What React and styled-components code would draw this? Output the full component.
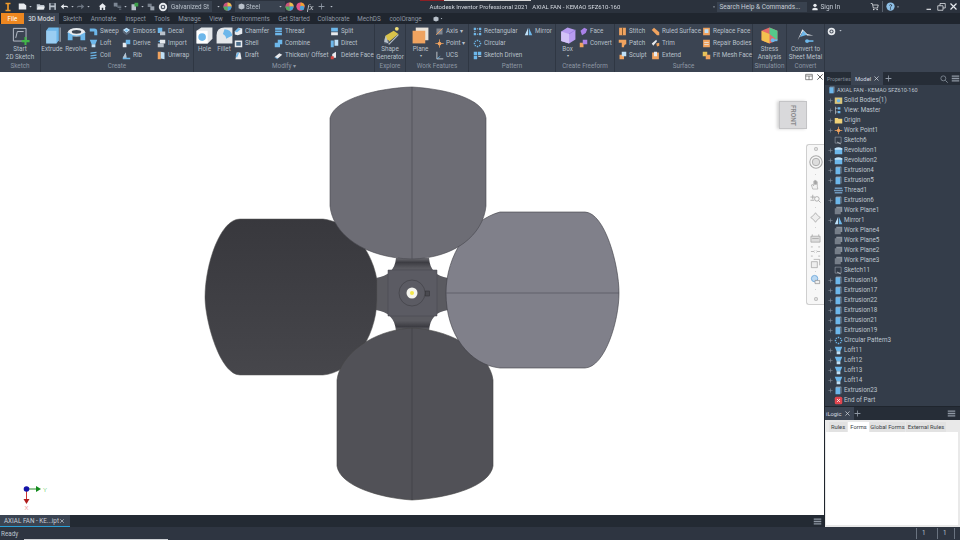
import React from 'react';
import styled, { createGlobalStyle } from 'styled-components';

const Global = createGlobalStyle`
  html, body { margin: 0; padding: 0; background: #2b323d; overflow: hidden; }
  #root { width: 960px; height: 540px; }
  * { box-sizing: border-box; }
`;

const B = '#6db7ea', L = '#bfe0f7', O = '#f0a35f', G = '#b9c1cb', W = '#e8ebef', D = '#5d6b7c', Gn = '#43b649';

const ICONS = {
  logo: <path d="M3 1h6v1.6H7v6.8h2V11H3V9.4h2V2.6H3z" fill="#f09a2b" />,
  doc: <path d="M1 2h7l3 2.5V10H1z" fill={W} />,
  open: <><path d="M1 3h4l1 1h5v6H1z" fill={G} /><path d="M1 10l2-4h9l-2 4z" fill={W} /></>,
  save: <><path d="M1.5 1.5h9v9h-9z" fill={G} /><path d="M3.5 1.5h5v3h-5zM3.5 7h5v3.5h-5z" fill="#39424f" /></>,
  undo: <path d="M1 6l4-3.5V5h3.5Q11 5 11 8 10 6.8 8 6.8H5v2.7z" fill={W} />,
  redo: <path d="M11 6L7 2.5V5H3.500Q1 5 1 8 2 6.800 4 6.800h3v2.700z" fill="#6d7683" />,
  caret: <path d="M4 5h4L6 7.500z" fill={G} />,
  home: <path d="M6 1.500L11 6H9.500v4.500H7V7.500H5v3H2.500V6H1z" fill={W} />,
  sel: <><path d="M1 1h5v5H1z" fill="#7d8794" /><path d="M4 5h7v1H4zM6 7h5v1H6zM8 9h3v1H8z" fill="#7d8794" /></>,
  green: <><path d="M2 3h6v8H2z" fill={G} /><path d="M6 1h5v5H6z" fill="#3fa34d" /></>,
  layers: <><path d="M1 1h6v5H1z" fill="#78818d" /><path d="M5 5h6v6H5z" fill="#98a1ac" /></>,
  gear: <><circle cx="6" cy="6" r="5" fill={W} /><circle cx="6" cy="6" r="2.800" fill="#4b5461" /><circle cx="6" cy="6" r="1.400" fill={W} /></>,
  ball: <><circle cx="6" cy="6" r="5.500" fill="#c9537d" /><path d="M6 .5A5.500 5.500 0 0 1 11.500 6H6z" fill="#e9c14a" /><path d="M11.500 6A5.500 5.500 0 0 1 6 11.500V6z" fill="#3ea7d8" /><path d="M6 11.500A5.500 5.500 0 0 1 .5 6H6z" fill="#4cae62" /></>,
  ball2: <><circle cx="6" cy="6" r="5.500" fill="#e2568a" /><path d="M6 .5A5.500 5.500 0 0 1 11.500 6H6z" fill="#f0a030" /><circle cx="8" cy="8" r="3" fill="#4ba3d8" /></>,
  cube: <path d="M1 3l5-2 5 2v6l-5 2-5-2z" fill={G} />,
  sketch: <><path d="M1.500 1.500h8v8h-8z" fill="none" stroke={G} strokeWidth=".6" /><path d="M3 7.500L4 3.500h4" fill="none" stroke={G} strokeWidth=".6" /><path d="M8.500 7h1.300v1.900h1.900v1.300H9.800V12H8.500v-1.800H6.700V8.900h1.800z" fill={Gn} /></>,
  extrude: <><path d="M2 3l1.500-2h6.500v8L8.500 11H2z" fill={B} /><path d="M2 3h6.500v8H2z" fill={L} opacity=".55" /><path d="M10.800 1v9" stroke={G} strokeWidth=".6" /></>,
  revolve: <><ellipse cx="6" cy="4" rx="5.500" ry="2.700" fill={W} /><path d="M.5 4v5h3V6.500h5V9h3V4Q6 8 .5 4z" fill={B} /><ellipse cx="6" cy="3.700" rx="3" ry="1.200" fill="#3b4452" /></>,
  sweep: <path d="M1 2h6q4 0 4 4v5H7V6H1z" fill={B} />,
  loft: <><path d="M1 1h10L8.500 7h-5z" fill={B} /><path d="M3.500 7h5v4h-5z" fill={L} /></>,
  coil: <path d="M2 2l8-1v1.800l-8 1zM2 5.500l8-1v1.800l-8 1zM2 9l8-1v1.800l-8 1z" fill={B} />,
  emboss: <><path d="M1 4l5-3 5 3-5 4z" fill={L} /><path d="M4 4.500L6 3l2 1.500L6 6z" fill={B} /><path d="M1 4v3l5 4 5-4V4L6 8z" fill={D} /></>,
  derive: <><path d="M1 5h5v6H1z" fill={W} /><path d="M5 1h6v6H5z" fill={B} /></>,
  rib: <><path d="M1 11V9L5 2l1 7h5v2z" fill={B} /><path d="M5 2l1 7H1z" fill={G} /></>,
  decal: <><path d="M1 1h6v7H1z" fill={B} /><path d="M4 6h7v5H4z" fill={G} /></>,
  import: <><path d="M1 6h8v5H1z" fill={G} /><path d="M4 1h7v5H4z" fill={W} /><path d="M1 3l3-1.500v3z" fill={B} /></>,
  unwrap: <><path d="M1 1h4v10H1z" fill={O} /><path d="M5 1l5 1v9l-5-1z" fill={L} /></>,
  hole: <><path d="M1 3l3-2h7v7l-3 3H1z" fill="#e4e7ea" /><path d="M1 3h7v8H1z" fill="#fff" /><circle cx="4.500" cy="7" r="2.400" fill={B} /></>,
  fillet: <><path d="M1 11V6Q1 1 6 1h5v10z" fill="#e4e7ea" /><path d="M6 2Q10 2 11 6L7 8Q7 6 5 5z" fill={B} /></>,
  chamfer: <><path d="M1 6l5-5 5 1v7l-6 2-4-1z" fill={W} /><path d="M1 6l5-5 3 2-5 4z" fill={B} /></>,
  shell: <><path d="M1 2h10v9H1z" fill={W} /><path d="M3 4h6v5H3z" fill="#4d6f8d" /></>,
  draft: <><path d="M2 11L3.500 2h5l1.500 9z" fill={W} /><path d="M5 2l-3 5 2 2 3-7z" fill={B} /></>,
  thread: <><path d="M1.500 1h9v2.500h-9zM1.500 4.500h9V7h-9zM1.500 8h9v3h-9z" fill={B} /></>,
  combine: <path d="M5 1h6v6H8v4H1V5h4z" fill={B} />,
  thicken: <><path d="M1 8l6-5 4 2-6 5z" fill={W} /><path d="M1 8l4 2v1L1 9z" fill={B} /></>,
  split: <><path d="M1.500 1h9v5h-9z" fill={B} /><path d="M1.500 7h9v4h-9z" fill={W} /></>,
  direct: <><path d="M1 2h4v9H1z" fill={B} /><path d="M6 1h5v8H6z" fill={L} /></>,
  deleteFace: <><path d="M3 4l5-3v8H3z" fill={W} /><path d="M1 7h4v4H1z" fill="#d9463f" /></>,
  shape: <><path d="M3 6l5-3 3 2-6 5-3-1z" fill="#d9c34a" /><path d="M2 8l3 1v2H2z" fill={D} /><path d="M3 6L2 10l3 1 6-6v1l-6 6z" fill={G} /><circle cx="10" cy="1.800" r="1.200" fill="#f2e07a" /></>,
  plane: <><path d="M3 1h8v8H3z" fill="#e9e3da" /><path d="M1 3h8v8H1z" fill={O} /></>,
  axis: <><path d="M2 2h8v8H2z" fill={W} opacity=".4" /><path d="M1.500 10.500L10 2" stroke={O} strokeWidth="1.200" /></>,
  point: <><circle cx="6" cy="6" r="2.500" fill={O} /><path d="M6 .5v11M.5 6h11" stroke={O} strokeWidth="1" /></>,
  ucs: <><path d="M2.500 1v9.500H11" fill="none" stroke={W} strokeWidth="1" /><path d="M2.500 10.500L7 7" stroke={B} strokeWidth="1" /></>,
  rect: <><path d="M1 1h3v3H1zM8 1h3v3H8zM1 8h3v3H1zM8 8h3v3H8z" fill={B} /><path d="M5 2h2v1H5zM5 9h2v1H5zM2 5h1v2H2zM9 5h1v2H9z" fill={L} /></>,
  circ: <path d="M5 1h2v2H5zM5 9h2v2H5zM1 5h2v2H1zM9 5h2v2H9zM2.300 2.300h1.600v1.600H2.300zM8.100 2.300h1.600v1.600H8.100zM2.300 8.100h1.600v1.600H2.300zM8.100 8.100h1.600v1.600H8.100z" fill={B} />,
  driven: <><path d="M1 1h4.500v4.500H1zM6.500 1H11v4.500H6.500z" fill={B} /><path d="M1 6.500h4.500V11H1z" fill={B} /><path d="M7 7h4v1H7z" fill={W} /></>,
  mirror: <><path d="M5.500 1L1 11h4.500z" fill={L} /><path d="M6.500 1L11 11H6.500z" fill={B} /></>,
  box: <><path d="M2 3.500L6 1l5 1.500v6L7 11 2 9.500z" fill="#b79cf0" /><path d="M2 3.500l5 1.500v6l-5-1.500z" fill="#d3c2f7" /><path d="M7 5l4-2.500" stroke="#8f72d8" strokeWidth=".4" /></>,
  face: <path d="M2 5l5-4 4 2-2 5-5 3z" fill="#a982e8" />,
  convert: <><path d="M1 5h5v6H1z" fill={O} /><path d="M5 1h6v6H5z" fill="#a982e8" /></>,
  stitch: <><path d="M1.500 1h9v10h-9z" fill={O} /><path d="M5.500 1h1v10h-1z" fill="#5d4225" /></>,
  patch: <path d="M1 1h10v6q-3 0-3 4H5V5H1z" fill={O} />,
  sculpt: <><path d="M2 5h6v6H2z" fill={O} /><path d="M5 1h6v6H5z" fill={L} /></>,
  ruled: <path d="M1 4l3-3 7 6v4H8z" fill={O} />,
  trim: <><path d="M1 6l6-5 1 2-5 6z" fill={W} /><path d="M7 6l4-1v4l-3 1z" fill={O} /></>,
  extend: <><path d="M1.500 2h9v9h-9z" fill={O} /><path d="M4 1h4v6H4z" fill={W} /></>,
  replace: <><path d="M1.500 1h9v10h-9z" fill={O} /><path d="M3.500 3h5v5h-5z" fill={L} /></>,
  repair: <><path d="M1.500 1h9v10h-9z" fill={O} /><path d="M3 4h6v1H3zM3 7h6v1H3z" fill={W} /></>,
  fitmesh: <><path d="M1 1h6v6H1z" fill="#e6c35a" /><path d="M5 5h6v6H5z" fill={O} /></>,
  stress: <><path d="M1 3l5-2 5 2v6l-5 2-5-2z" fill="#e66a6a" /><path d="M6 1l5 2v6L6 5z" fill="#55c98a" /><path d="M1 9V3l5 2v6z" fill="#f3c14f" /><path d="M7 9h4" stroke={B} strokeWidth="1.200" /><circle cx="8" cy="9" r="1.200" fill={B} /></>,
  sheet: <><path d="M1 9l3-7 3 3 4 1H7L4 4z" fill={W} /><path d="M2.500 7L4.500 3l2.500 2.500z" fill={B} /><path d="M6 9.500h5" stroke={B} strokeWidth="1" /><circle cx="7" cy="9.500" r="1.200" fill={B} /></>,
  folder: <path d="M1 2.500h4l1 1h5V10H1z" fill="#efd178" />,
  solid: <><path d="M1 2h10v8.500H1z" fill="#d9c47a" /><circle cx="6" cy="6.300" r="2.300" fill={B} /></>,
  view: <><path d="M2 1v10M2 3h3M2 8h3" stroke={W} strokeWidth=".7" fill="none" /><path d="M5 1.500h3.500v3H5zM5 6.500h3.500v3H5z" fill={B} /></>,
  workpoint: <><path d="M6 1v10M1 6h10" stroke={O} strokeWidth="1" /><circle cx="6" cy="6" r="2.300" fill={O} /></>,
  treesketch: <><path d="M1.500 1.500h8v8h-8z" fill="none" stroke={G} strokeWidth=".6" /><path d="M4 8l5 2.500" stroke={W} strokeWidth=".8" /></>,
  revol: <><path d="M1 3h10v8H1z" fill={B} /><path d="M1 3q5-3 10 0v2H1z" fill={L} /></>,
  ext: <><path d="M2 2h6.500v9H2z" fill={B} /><path d="M2 2l1-1h6.500L8.500 2z" fill={L} /><path d="M9.500 1v9" stroke={G} strokeWidth=".6" /></>,
  threadT: <path d="M1 2h10v2H1zM0 5h12v2H0zM1 8h10v2H1z" fill="#6f97bb" />,
  wplane: <><path d="M3 1h8v7H3z" fill="#8a929c" /><path d="M1 3h8v8H1z" fill="#767e89" /></>,
  end: <><rect x="1" y="1" width="10" height="10" rx="2" fill="#e0464f" /><path d="M4 4l4 4M8 4l-4 4" stroke="#fff" strokeWidth="1" /></>,
  cart: <><path d="M1 2h2l1.500 6H10l1-4H4" fill="none" stroke={W} strokeWidth="1" /><circle cx="5" cy="10" r="1" fill={W} /><circle cx="9.500" cy="10" r="1" fill={W} /></>,
  user: <><circle cx="6" cy="3.500" r="2.500" fill={W} /><path d="M2 11V8.500Q6 5.500 10 8.500V11z" fill={W} /></>,
  help: <><circle cx="6" cy="6" r="5.500" fill="#8fc1e8" /><path d="M4.500 4.500Q6 2.500 7.500 4 8 5.500 6 6.500V7.500" fill="none" stroke="#26303c" strokeWidth="1.100" /><circle cx="6" cy="9.200" r=".8" fill="#26303c" /></>,
  min: <path d="M2 9h6v1.500H2z" fill={W} />,
  restore: <><path d="M4 2h7v6H4z" fill="none" stroke={W} strokeWidth="1" /><path d="M1 5h7v6H1z" fill="#2b323d" stroke={W} strokeWidth="1" /></>,
  close: <path d="M2 2l8 8M10 2l-8 8" stroke={W} strokeWidth="1.600" />,
  search: <><circle cx="5" cy="5" r="3.700" fill="none" stroke="#8f98a4" strokeWidth="1.100" /><path d="M8 8l3.500 3.500" stroke="#8f98a4" strokeWidth="1.300" /></>,
  menu: <path d="M1 2h10v1.800H1zM1 5.100h10v1.800H1zM1 8.200h10V10H1z" fill="#8f98a4" />,
  plus: <path d="M5.300 1h1.400v4.300H11v1.400H6.700V11H5.300V6.700H1V5.300h4.300z" fill="#8f98a4" />,
  x: <path d="M2.500 2.500l7 7M9.500 2.500l-7 7" stroke="#d8dde3" strokeWidth="1.200" />,
  winSplit: <><path d="M1 2h10v8H1z" fill="none" stroke="#555" strokeWidth="1" /><path d="M1 4.500h10M6 4.500V10" stroke="#555" strokeWidth="1" /></>,
  winClose: <path d="M2 2l8 8M10 2l-8 8" stroke="#444" strokeWidth="1.300" />,
  navRing: <><circle cx="6" cy="6" r="5.300" fill="none" stroke="#aaa" strokeWidth=".9" /><circle cx="6" cy="6" r="3.200" fill="#ddd" stroke="#aaa" strokeWidth=".8" /></>,
  navHand: <path d="M3 11L1.500 6.500 3 6l1 1.500V2.500l1 0V6 1.500h1V6 2h1v4-3h1v5L8.500 11z" fill="#f2f2f2" stroke="#999" strokeWidth=".6" />,
  navZoom: <><circle cx="7.500" cy="7.500" r="2.500" fill="none" stroke="#999" strokeWidth=".8" /><path d="M9.300 9.300L11.500 11.500M.5 5.500h5M3 3v5M.5 9h4" stroke="#999" strokeWidth=".8" /></>,
  navOrbit: <path d="M6 .8L8 3.500 11.200 6 8 8.500 6 11.200 4 8.500.8 6 4 3.500z" fill="#eee" stroke="#999" strokeWidth=".7" />,
  navCube: <><path d="M1 3.500h10V10H1z" fill="#ddd" stroke="#999" strokeWidth=".7" /><path d="M2.500 1.500v2M9.500 1.500v2M2.500 6h7" stroke="#999" strokeWidth=".7" /></>,
  navFit: <path d="M1 1h2M9 1h2M1 11h2M9 11h2M1 6h3M8 6h3M4 6l1-1M4 6l1 1M8 6L7 5M8 6l-1 1" stroke="#999" strokeWidth=".7" fill="none" />,
  navPage: <><path d="M4 1.500h6.500V8" fill="none" stroke="#999" strokeWidth=".7" /><path d="M1.500 4h6.500v6.500H1.500z" fill="#eee" stroke="#999" strokeWidth=".7" /></>,
  navBlue: <><circle cx="5" cy="5" r="3.500" fill="#bcd9f2" stroke="#5b9bd5" strokeWidth=".8" /><path d="M5.500 7h5v3.500h-5z" fill="#eee" stroke="#777" strokeWidth=".6" /></>,
  navDot: <circle cx="6" cy="6" r="1" fill="#aaa" />,
  navGear: <><circle cx="6" cy="6" r="4" fill="#bbb" /><circle cx="6" cy="6" r="1.800" fill="#eee" /></>,
};

const IconSvg = styled.svg`
  display: block;
  flex: none;
  width: ${p => p.$s}px;
  height: ${p => p.$s}px;
`;
const Icon = ({ k, s = 9 }) => <IconSvg $s={s} viewBox="0 0 12 12">{ICONS[k]}</IconSvg>;

const Window = styled.div`
  width: 960px;
  height: 540px;
  display: flex;
  flex-direction: column;
  font-family: "Roboto", "Liberation Sans", sans-serif;
  font-size: 6.3px;
  color: #b8c0ca;
  overflow: hidden;
  filter: blur(0.3px);
`;

const TitleBar = styled.div`
  position: relative;
  height: 13px;
  flex: none;
  background: #2b323d;
  display: flex;
  align-items: center;
`;
const Qat = styled.div`
  display: flex;
  align-items: center;
  width: ${p => p.$w}px;
  flex: none;
  padding-left: ${p => p.$pl || 0}px;
  gap: ${p => p.$gap || 0}px;
`;
const QatSep = styled.span`
  width: 1px;
  height: 11px;
  background: #59626f;
  margin: 0 3px;
`;
const Combo = styled.div`
  width: ${p => p.$w}px;
  height: 11px;
  flex: none;
  background: #39424f;
  display: flex;
  align-items: center;
  justify-content: space-between;
  padding: 0 1px 0 3px;
  gap: 1px;
  white-space: nowrap;
`;
const ComboText = styled.span`
  flex: 1;
  overflow: hidden;
`;
const Fx = styled.span`
  font-family: "Liberation Serif", serif;
  font-style: italic;
  font-size: 9px;
  color: #d6dbe1;
`;
const TitleText = styled.div`
  width: 280px;
  flex: none;
  color: #d4d9e0;
  font-size: 6px;
  white-space: pre;
`;
const Progress = styled.div`
  position: absolute;
  top: 0;
  left: 420px;
  width: 111px;
  height: 1px;
  background: linear-gradient(90deg, #8c1f24 0 22%, #d8d8d8 22%);
`;
const SearchBox = styled.div`
  width: 90px;
  height: 10px;
  flex: none;
  background: #39424f;
  padding-left: 3px;
  line-height: 10px;
  font-size: 6.5px;
  color: #c5ccd5;
  white-space: nowrap;
`;
const SignIn = styled.div`
  width: 63px;
  padding-left: 4px;
  flex: none;
  display: flex;
  align-items: center;
  gap: 2px;
  font-size: 6.5px;
  color: #c5ccd5;
`;

const TabBar = styled.div`
  height: 11px;
  flex: none;
  background: #20262f;
  display: flex;
  align-items: stretch;
  padding-left: 1px;
`;
const Tab = styled.div`
  width: ${p => p.$w}px;
  flex: none;
  display: flex;
  align-items: center;
  justify-content: center;
  white-space: nowrap;
  color: ${p => (p.$active ? '#e6eaee' : p.$file ? '#fff' : '#8f98a4')};
  background: ${p => (p.$active ? '#3b4452' : p.$file ? '#ee8720' : 'transparent')};
`;

const Ribbon = styled.div`
  height: 48px;
  flex: none;
  background: #3b4452;
  display: flex;
`;
const Panel = styled.section`
  width: ${p => p.$w}px;
  flex: none;
  display: flex;
  flex-direction: column;
  border-right: 1px solid #2f3743;
`;
const PanelBody = styled.div`
  flex: 1;
  display: flex;
  padding-left: ${p => p.$pl || 0}px;
`;
const PanelTitle = styled.div`
  height: 10px;
  flex: none;
  text-align: center;
  line-height: 9px;
  color: #8d97a4;
  white-space: nowrap;
`;
const Big = styled.div`
  width: ${p => p.$w}px;
  flex: none;
  display: flex;
  flex-direction: column;
  align-items: center;
  padding-top: 2px;
  text-align: center;
  line-height: 7.5px;
  white-space: nowrap;
`;
const BigLabel = styled.div`
  margin-top: 1px;
`;
const Caret = styled.div`
  height: 4px;
  line-height: 4px;
  font-size: 4px;
  color: #bcc4ce;
`;
const Col = styled.div`
  width: ${p => p.$w}px;
  flex: none;
  padding-top: 1px;
`;
const Small = styled.div`
  height: 12px;
  display: flex;
  align-items: center;
  gap: 2px;
  white-space: nowrap;
`;
const Spare = styled.div`
  flex: 1;
  padding: 3px 0 0 2px;
  display: flex;
  gap: 1px;
  align-items: flex-start;
`;

const Main = styled.div`
  flex: 1;
  display: flex;
  min-height: 0;
`;
const LeftColumn = styled.div`
  width: 824px;
  flex: none;
  display: flex;
  flex-direction: column;
`;
const Canvas = styled.div`
  position: relative;
  flex: 1;
  background: #fff;
  overflow: hidden;
`;
const FanSvg = styled.svg`
  position: absolute;
  inset: 0;
  display: block;
`;
const WinButtons = styled.div`
  position: absolute;
  top: 1px;
  right: 0;
  display: flex;
  gap: 3px;
`;
const ViewCube = styled.div`
  position: absolute;
  left: 779px;
  top: 29px;
  width: 28px;
  height: 28px;
  background: #d9d9db;
  border: 1px solid #c4c4c6;
  box-shadow: -2px 0 3px rgba(0, 0, 0, 0.18);
  display: flex;
  align-items: center;
  justify-content: center;
`;
const CubeLabel = styled.span`
  writing-mode: vertical-rl;
  font-size: 6.5px;
  font-weight: 700;
  color: #8b8b8e;
`;
const NavBar = styled.div`
  position: absolute;
  left: 806px;
  top: 72px;
  width: 18px;
  height: 161px;
  background: #f7f7f7;
  border: 1px solid #cfcfcf;
  border-right: none;
  border-radius: 3px 0 0 3px;
  display: flex;
  flex-direction: column;
  align-items: center;
`;
const NavSlot = styled.div`
  height: ${p => p.$h}px;
  flex: none;
  display: flex;
  align-items: center;
  justify-content: center;
`;

const Side = styled.aside`
  flex: 1;
  display: flex;
  flex-direction: column;
  background: #1f252d;
  padding-left: 1px;
  min-width: 0;
`;
const PaneHead = styled.div`
  height: ${p => p.$h}px;
  flex: none;
  background: #262d37;
  display: flex;
  align-items: stretch;
`;
const PaneTab = styled.div`
  width: ${p => p.$w}px;
  flex: none;
  display: flex;
  align-items: center;
  padding-left: ${p => p.$pl || 2}px;
  gap: 2px;
  font-size: ${p => (p.$on ? 5.8 : 5.2)}px;
  color: ${p => (p.$on ? '#d5dae0' : '#808a96')};
  background: ${p => (p.$on ? '#3b4452' : 'transparent')};
  white-space: nowrap;
`;
const HeadTool = styled.div`
  display: flex;
  align-items: center;
  padding-left: ${p => p.$pl || 0}px;
`;
const Tree = styled.div`
  height: 321px;
  flex: none;
  background: #343d4a;
  overflow: hidden;
`;
const Row = styled.div`
  height: 10px;
  display: flex;
  align-items: center;
  padding-left: ${p => (p.$root ? 3 : 0)}px;
  font-size: ${p => (p.$root ? 5.5 : 6.3)}px;
  white-space: nowrap;
  color: #bfc6cf;
`;
const Expander = styled.span`
  width: 9px;
  flex: none;
  padding-left: 3px;
  display: flex;
`;
const RowIcon = styled.span`
  margin-right: 1px;
  flex: none;
`;
const Divider = styled.div`
  height: 1px;
  flex: none;
  background: #1f252d;
`;
const Forms = styled.div`
  flex: 1;
  background: #e9e9e9;
  padding: 2px 2px 2px 1px;
  display: flex;
  flex-direction: column;
`;
const FormTabs = styled.div`
  height: 10px;
  flex: none;
  display: flex;
  padding-left: 3px;
  gap: 1px;
`;
const FormTab = styled.div`
  width: ${p => p.$w}px;
  flex: none;
  text-align: center;
  line-height: 10px;
  font-size: 5.8px;
  color: #3a3f46;
  background: ${p => (p.$on ? '#fff' : '#e2e2e2')};
  white-space: nowrap;
`;
const FormBody = styled.div`
  flex: 1;
  background: #fff;
`;

const DocBar = styled.div`
  height: 12px;
  flex: none;
  background: #232a33;
  display: flex;
  justify-content: space-between;
  align-items: stretch;
`;
const DocTab = styled.div`
  width: 70px;
  background: #3b4452;
  border-bottom: 1px solid #2a9fd6;
  display: flex;
  align-items: center;
  justify-content: space-between;
  padding: 0 5px 0 4px;
  color: #c8ced6;
  white-space: nowrap;
`;
const DocMenu = styled.div`
  display: flex;
  align-items: center;
  padding-right: 2px;
`;
const Status = styled.footer`
  position: relative;
  height: 13px;
  flex: none;
  background: #2e3541;
  display: flex;
  align-items: center;
  padding-left: 1px;
  color: #bcc4ce;
`;
const StatusText = styled.span`
  flex: 1;
`;
const StatusCell = styled.span`
  width: ${p => p.$w}px;
  flex: none;
  height: 11px;
  border-left: 1px solid #6a7380;
  padding-left: 5px;
  line-height: 11px;
`;
const Sliver = styled.div`
  position: absolute;
  left: 24px;
  bottom: 0;
  width: 144px;
  height: 1px;
  background: #cfd2d6;
`;

const panels = [
  { t: 'Sketch', w: 41, items: [{ big: ['Start', '2D Sketch'], i: 'sketch', w: 40 }] },
  { t: 'Create', w: 153, items: [
    { big: ['Extrude'], i: 'extrude', w: 22 }, { big: ['Revolve'], i: 'revolve', w: 26 },
    { w: 33, col: [['sweep', 'Sweep'], ['loft', 'Loft'], ['coil', 'Coil']] },
    { w: 35, col: [['emboss', 'Emboss'], ['derive', 'Derive'], ['rib', 'Rib']] },
    { w: 34, col: [['decal', 'Decal'], ['import', 'Import'], ['unwrap', 'Unwrap']] },
  ] },
  { t: 'Modify  ▾', w: 181, pl: 1, items: [
    { big: ['Hole'], i: 'hole', w: 19 }, { big: ['Fillet'], i: 'fillet', w: 20 },
    { w: 40, col: [['chamfer', 'Chamfer'], ['shell', 'Shell'], ['draft', 'Draft']] },
    { w: 56, col: [['thread', 'Thread'], ['combine', 'Combine'], ['thicken', 'Thicken/ Offset']] },
    { w: 44, col: [['split', 'Split'], ['direct', 'Direct'], ['deleteFace', 'Delete Face']] },
  ] },
  { t: 'Explore', w: 31, items: [{ big: ['Shape', 'Generator'], i: 'shape', w: 30 }] },
  { t: 'Work Features', w: 63, items: [
    { big: ['Plane'], i: 'plane', w: 29, caret: true },
    { w: 33, col: [['axis', 'Axis  ▾'], ['point', 'Point  ▾'], ['ucs', 'UCS']] },
  ] },
  { t: 'Pattern', w: 87, pl: 4, items: [
    { w: 51, col: [['rect', 'Rectangular'], ['circ', 'Circular'], ['driven', 'Sketch Driven']] },
    { w: 31, col: [['mirror', 'Mirror']] },
  ] },
  { t: 'Create Freeform', w: 59, items: [
    { big: ['Box'], i: 'box', w: 23, caret: true },
    { w: 35, col: [['face', 'Face'], ['convert', 'Convert']] },
  ] },
  { t: 'Surface', w: 138, pl: 3, items: [
    { w: 33, col: [['stitch', 'Stitch'], ['patch', 'Patch'], ['sculpt', 'Sculpt']] },
    { w: 51, col: [['ruled', 'Ruled Surface'], ['trim', 'Trim'], ['extend', 'Extend']] },
    { w: 50, col: [['replace', 'Replace Face'], ['repair', 'Repair Bodies'], ['fitmesh', 'Fit Mesh Face']] },
  ] },
  { t: 'Simulation', w: 34, items: [{ big: ['Stress', 'Analysis'], i: 'stress', w: 33 }] },
  { t: 'Convert', w: 38, items: [{ big: ['Convert to', 'Sheet Metal'], i: 'sheet', w: 37 }] },
];

const tabs = [
  ['3D Model', 35], ['Sketch', 27], ['Annotate', 35], ['Inspect', 29], ['Tools', 24], ['Manage', 31],
  ['View', 22], ['Environments', 47], ['Get Started', 40], ['Collaborate', 39], ['MechDS', 32], ['coolOrange', 41],
];

const ext = n => ['ext', 'Extrusion' + n, true];
const tree = [
  ['solid', 'Solid Bodies(1)', true], ['view', 'View: Master', true], ['folder', 'Origin', true],
  ['workpoint', 'Work Point1', true], ['treesketch', 'Sketch6', false],
  ['revol', 'Revolution1', true], ['revol', 'Revolution2', true], ext(4), ext(5),
  ['threadT', 'Thread1', false], ext(6), ['wplane', 'Work Plane1', false], ['mirror', 'Mirror1', true],
  ['wplane', 'Work Plane4', false], ['wplane', 'Work Plane5', false], ['wplane', 'Work Plane2', false],
  ['wplane', 'Work Plane3', false], ['treesketch', 'Sketch11', false],
  ext(16), ext(17), ext(22), ext(18), ext(21), ext(19),
  ['circ', 'Circular Pattern3', true], ['loft', 'Loft11', true], ['loft', 'Loft12', true],
  ['loft', 'Loft13', true], ['loft', 'Loft14', true], ext(23), ['end', 'End of Part', false],
];

const navItems = [
  ['navGear', 8], ['navRing', 18], ['navDot', 6], ['navHand', 14], ['navZoom', 13], ['navDot', 7], ['navOrbit', 13],
  ['navDot', 7], ['navCube', 14], ['navFit', 13], ['navPage', 11], ['navDot', 4], ['navBlue', 13], ['navDot', 7], ['navGear', 11],
];

const Fan = () => (
  <FanSvg width="824" height="443" viewBox="0 72 824 443">
    <defs>
      <linearGradient id="rim" x1="0" y1="0" x2="0" y2="1">
        <stop offset="0" stopColor="#6d6d73" /><stop offset=".06" stopColor="#3c3c42" /><stop offset=".14" stopColor="#5a5a60" />
        <stop offset=".86" stopColor="#5a5a60" /><stop offset=".94" stopColor="#3c3c42" /><stop offset="1" stopColor="#77777d" />
      </linearGradient>
      <linearGradient id="leftB" x1="0" y1="0" x2="0" y2="1">
        <stop offset="0" stopColor="#38383d" /><stop offset="1" stopColor="#46464b" />
      </linearGradient>
    </defs>
    <path d="M396 258H429C430 270 436 276 448 278V310C436 312 430 318 429 331H396C395 318 388 312 376 310V278C388 276 395 270 396 258Z" fill="url(#rim)" />
    <path d="M388 270H437V316H388Z" fill="#5b5b63" stroke="#47474d" strokeWidth=".5" />
    <circle cx="412" cy="293" r="13" fill="none" stroke="#3d3d42" strokeWidth=".6" />
    <rect x="425.500" y="291" width="4" height="5" fill="#4a4a50" stroke="#2d2d30" strokeWidth=".5" />
    <circle cx="412" cy="293" r="5.500" fill="#f4f4ee" />
    <circle cx="412" cy="293" r="2" fill="#f3e84a" />
    <path d="M240 219L323 219C350 222 372 250 377 280V300C376 340 350 373 323 375L240 375C220 375 205 321 205 297C205 265 220 219 240 219Z" fill="url(#leftB)" stroke="#555" strokeWidth=".5" />
    <path d="M412 328C372 330 340 355 337 380V466C340 486 380 498 412 500C450 498 490 486 493 466V380C490 355 455 330 412 328Z" fill="#515157" stroke="#444" strokeWidth=".6" />
    <path d="M412 328V500" stroke="#3f3f45" strokeWidth=".7" />
    <path d="M500 212L585 212C605 213 619 265 619 293C619 321 605 367 585 368L500 368C470 365 446 335 446 293C446 255 470 220 500 212Z" fill="#80808a" stroke="#3d3d43" strokeWidth=".6" />
    <path d="M446 293H619" stroke="#55555c" strokeWidth=".7" />
    <path d="M412 87C380 88 335 98 330 118V206C333 235 365 258 412 259C455 258 483 235 486 206V118C483 98 445 89 412 87Z" fill="#6d6d75" stroke="#47474d" strokeWidth=".6" />
    <path d="M412 87V259" stroke="#4c4c53" strokeWidth=".7" />
    <path d="M26.500 489V499" stroke="#c33" strokeWidth="1" />
    <path d="M26.500 489H37" stroke="#2a8a2a" strokeWidth="1" />
    <path d="M23.500 499H29.500L26.500 504Z" fill="#b01c1c" />
    <path d="M36 486L41 489L36 492Z" fill="#118a1b" />
    <circle cx="26.500" cy="489" r="2.800" fill="#1313a8" />
    <text x="43" y="491.500" fontSize="6" fill="#7fd67f" fontFamily="Liberation Sans">Y</text>
    <text x="24.500" y="509.500" fontSize="6" fill="#ef9a9a" fontFamily="Liberation Sans">X</text>
  </FanSvg>
);

export default function App() {
  return (
    <Window>
      <Global />
      <TitleBar>
        <Qat $w={168} $pl={3}>
          <Icon k="logo" s={10} />
          <Qat $w={5} />
          <Icon k="doc" s={9} /><Icon k="caret" s={7} /><Qat $w={2} />
          <Icon k="open" s={9} /><Qat $w={3} /><Icon k="save" s={9} /><Qat $w={3} />
          <Icon k="undo" s={9} /><Icon k="caret" s={7} /><Icon k="redo" s={9} /><Icon k="caret" s={7} />
          <QatSep />
          <Icon k="home" s={9} /><Qat $w={6} /><Icon k="sel" s={9} /><Icon k="caret" s={7} /><Qat $w={1} />
          <Icon k="green" s={9} /><Icon k="caret" s={7} /><Qat $w={1} />
          <Icon k="layers" s={8} /><Qat $w={3} /><Icon k="gear" s={10} />
        </Qat>
        <Combo $w={44}><ComboText>Galvanized St</ComboText></Combo>
        <Qat $w={3} /><Qat $w={8}><Icon k="caret" s={7} /></Qat>
        <Icon k="ball" s={9} />
        <Qat $w={3} />
        <Combo $w={50}><Icon k="cube" s={7} /><ComboText>Steel</ComboText><Icon k="caret" s={7} /></Combo>
        <Icon k="ball" s={9} /><Qat $w={2} /><Icon k="ball2" s={9} /><Qat $w={2} />
        <Fx>fx</Fx><Qat $w={4} /><Icon k="plus" s={7} /><Qat $w={3} /><Icon k="caret" s={7} />
        <Qat $w={95} />
        <TitleText>Autodesk Inventor Professional 2021   AXIAL FAN - KEMAO SFZ610-160</TitleText>
        <Qat $w={1} />
        <Icon k="caret" s={6} />
        <SearchBox>Search Help &amp; Commands...</SearchBox>
        <SignIn><Icon k="user" s={8} />Sign In</SignIn>
        <Icon k="cart" s={9} />
        <QatSep />
        <Icon k="help" s={9} />
        <Icon k="caret" s={6} />
        <Qat $w={24} />
        <Icon k="min" s={9} /><Qat $w={3} /><Icon k="restore" s={9} /><Qat $w={3} /><Icon k="close" s={9} />
        <Progress />
      </TitleBar>

      <TabBar>
        <Tab $w={23} $file>File</Tab>
        {tabs.map(([n, w], i) => <Tab key={n} $w={w} $active={i === 0}>{n}</Tab>)}
        <Tab $w={24}><Icon k="cube" s={6} /><Icon k="caret" s={5} /></Tab>
      </TabBar>

      <Ribbon>
        {panels.map(p => (
          <Panel key={p.t} $w={p.w}>
            <PanelBody $pl={p.pl}>
              {p.items.map((it, i) => it.big ? (
                <Big key={i} $w={it.w}>
                  <Icon k={it.i} s={19} />
                  <BigLabel>{it.big.map(l => <div key={l}>{l}</div>)}</BigLabel>
                  {it.caret && <Caret>▾</Caret>}
                </Big>
              ) : (
                <Col key={i} $w={it.w}>
                  {it.col.map(([k, l]) => <Small key={l}><Icon k={k} s={9} />{l}</Small>)}
                </Col>
              ))}
            </PanelBody>
            <PanelTitle>{p.t}</PanelTitle>
          </Panel>
        ))}
        <Spare><Icon k="gear" s={9} /><Icon k="caret" s={7} /></Spare>
      </Ribbon>

      <Main>
        <LeftColumn>
          <Canvas>
            <Fan />
            <WinButtons><Icon k="winSplit" s={8} /><Icon k="winClose" s={8} /></WinButtons>
            <ViewCube><CubeLabel>FRONT</CubeLabel></ViewCube>
            <NavBar>
              {navItems.map(([k, h], i) => <NavSlot key={i} $h={h}><Icon k={k} s={k === 'navDot' ? 5 : k === 'navGear' ? 6 : k === 'navRing' ? 14 : 11} /></NavSlot>)}
            </NavBar>
          </Canvas>
          <DocBar>
            <DocTab>AXIAL FAN - KE...ipt<Icon k="x" s={6} /></DocTab>
            <DocMenu><Icon k="menu" s={9} /></DocMenu>
          </DocBar>
        </LeftColumn>
        <Side>
          <PaneHead $h={13}>
            <PaneTab $w={26} $pl={2}>Properties</PaneTab>
            <PaneTab $w={32} $on $pl={4}>Model<Icon k="x" s={7} /></PaneTab>
            <HeadTool $pl={2}><Icon k="plus" s={7} /></HeadTool>
            <HeadTool $pl={48}><Icon k="search" s={8} /></HeadTool>
            <HeadTool $pl={3}><Icon k="menu" s={9} /></HeadTool>
          </PaneHead>
          <Tree>
            <Row $root><RowIcon><Icon k="ext" s={8} /></RowIcon>AXIAL FAN - KEMAO SFZ610-160</Row>
            {tree.map(([k, l, plus]) => (
              <Row key={l}>
                <Expander>{plus && <Icon k="plus" s={5} />}</Expander>
                <RowIcon><Icon k={k} s={9} /></RowIcon>
                {l}
              </Row>
            ))}
          </Tree>
          <Divider />
          <PaneHead $h={13}>
            <PaneTab $w={29} $on $pl={1}>iLogic<Icon k="x" s={7} /></PaneTab>
            <HeadTool $pl={0}><Icon k="plus" s={7} /></HeadTool>
            <HeadTool $pl={86}><Icon k="menu" s={9} /></HeadTool>
          </PaneHead>
          <Forms>
            <FormTabs>
              <FormTab $w={18}>Rules</FormTab>
              <FormTab $w={21} $on>Forms</FormTab>
              <FormTab $w={35}>Global Forms</FormTab>
              <FormTab $w={40}>External Rules</FormTab>
            </FormTabs>
            <FormBody />
          </Forms>
        </Side>
      </Main>

      <Status>
        <StatusText>Ready</StatusText>
        <StatusCell $w={21}>1</StatusCell>
        <StatusCell $w={17}>1</StatusCell>
        <StatusCell $w={2} />
        <Sliver />
      </Status>
    </Window>
  );
}
